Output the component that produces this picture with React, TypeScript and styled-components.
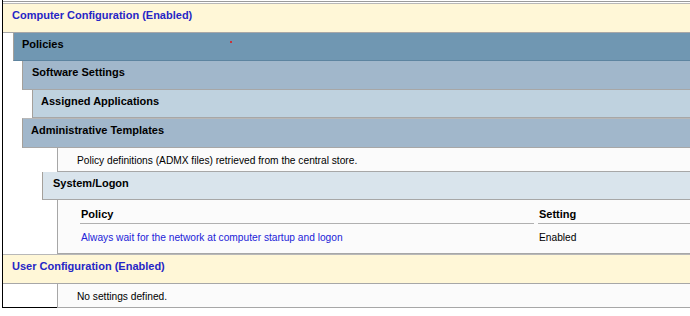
import React from 'react';
import styled, { createGlobalStyle } from 'styled-components';

const GlobalStyle = createGlobalStyle`
  html, body {
    margin: 0;
    padding: 0;
    background: #ffffff;
  }
  body {
    font-family: Tahoma, 'Liberation Sans', Arial, sans-serif;
    font-size: 10.2px;
    color: #000000;
  }
`;

type Level = 0 | 1 | 2 | 3 | 4;

const headerColors: Record<Level, string> = {
  0: '#fff7d7',
  1: '#7097b2',
  2: '#a1b7cb',
  3: '#bfd2df',
  4: '#d9e4ec',
};

// fill + bottom border, top border is added on top of this
const headerHeights: Record<Level, number> = {
  0: 29,
  1: 28,
  2: 29,
  3: 28,
  4: 28,
};

const Frame = styled.div`
  margin-left: 2px;
  width: 688px;
  border-left: 1px solid #000000;
  overflow: hidden;
`;

const TopRule = styled.div`
  margin-top: 1px;
  height: 1px;
  border-top: 1px solid #9a9a9a;
`;

const Header = styled.div<{ $level: Level; $pad: number; $top?: boolean }>`
  position: relative;
  height: ${(p) => headerHeights[p.$level] + (p.$top ? 1 : 0)}px;
  box-sizing: border-box;
  padding: 4px 0 0 ${(p) => p.$pad}px;
  line-height: 14px;
  font-size: 11px;
  font-weight: bold;
  white-space: nowrap;
  background: ${(p) => headerColors[p.$level]};
  color: ${(p) => (p.$level === 0 ? '#2626c6' : '#000000')};
  border-top: ${(p) => (p.$top ? '1px solid #b8b8b8' : 'none')};
  border-bottom: 1px solid ${(p) => (p.$level === 1 ? '#5d84a0' : '#a7a7a7')};
  border-left: ${(p) => (p.$level === 0 ? 'none' : '1px solid #a5a09a')};
`;

const Body = styled.div<{ $indent: number }>`
  padding-left: ${(p) => p.$indent}px;
`;

const Marker = styled.span`
  position: absolute;
  left: 216px;
  top: 8px;
  width: 2px;
  height: 2px;
  border-radius: 1px;
  background: #e81010;
`;

const Note = styled.div<{ $indent?: number }>`
  flex: 1;
  margin-left: ${(p) => p.$indent ?? 0}px;
  height: 24px;
  box-sizing: border-box;
  padding: 6px 0 0 19px;
  line-height: 13px;
  background: #fbfbfb;
  border-left: 1px solid #a7a7a7;
  border-bottom: 1px solid #a7a7a7;
  white-space: nowrap;
`;

const Tail = styled.div`
  display: flex;
`;

const Gutter = styled.div`
  width: 54px;
  border-bottom: 1px solid #000000;
`;

const TableBox = styled.div`
  background: #fbfbfb;
  border-left: 1px solid #a7a7a7;
  border-bottom: 1px solid #a7a7a7;
  padding: 7px 0 0 22px;
  height: 54px;
  box-sizing: border-box;
`;

const Grid = styled.div`
  display: grid;
  grid-template-columns: 454px 1fr;
  column-gap: 4px;
  line-height: 14px;
  white-space: nowrap;
`;

const Th = styled.div`
  font-size: 11px;
  font-weight: bold;
  padding: 0 0 2px 1px;
  border-bottom: 1px solid #b0b0b0;
`;

const Td = styled.div<{ $link?: boolean }>`
  padding: 7px 0 0 1px;
  color: ${(p) => (p.$link ? '#2222d8' : '#000000')};
`;

const App: React.FC = () => {
  return (
    <>
      <GlobalStyle />
      <Frame>
        <TopRule />
        <Header $level={0} $pad={9} $top>
          Computer Configuration (Enabled)
        </Header>
        <Body $indent={10}>
          <Header $level={1} $pad={8}>
            Policies
            <Marker />
          </Header>
          <Body $indent={9}>
            <Header $level={2} $pad={9}>
              Software Settings
            </Header>
            <Body $indent={10}>
              <Header $level={3} $pad={8}>
                Assigned Applications
              </Header>
            </Body>
            <Header $level={2} $pad={8} $top>
              Administrative Templates
            </Header>
            <Body $indent={20}>
              <Note $indent={15}>
                Policy definitions (ADMX files) retrieved from the central store.
              </Note>
              <Header $level={4} $pad={10}>
                System/Logon
              </Header>
              <Body $indent={15}>
                <TableBox>
                  <Grid>
                    <Th>Policy</Th>
                    <Th>Setting</Th>
                    <Td $link>Always wait for the network at computer startup and logon</Td>
                    <Td>Enabled</Td>
                  </Grid>
                </TableBox>
              </Body>
            </Body>
          </Body>
        </Body>
        <Header $level={0} $pad={9} $top>
          User Configuration (Enabled)
        </Header>
        <Tail>
          <Gutter />
          <Note>No settings defined.</Note>
        </Tail>
      </Frame>
    </>
  );
};

export default App;
